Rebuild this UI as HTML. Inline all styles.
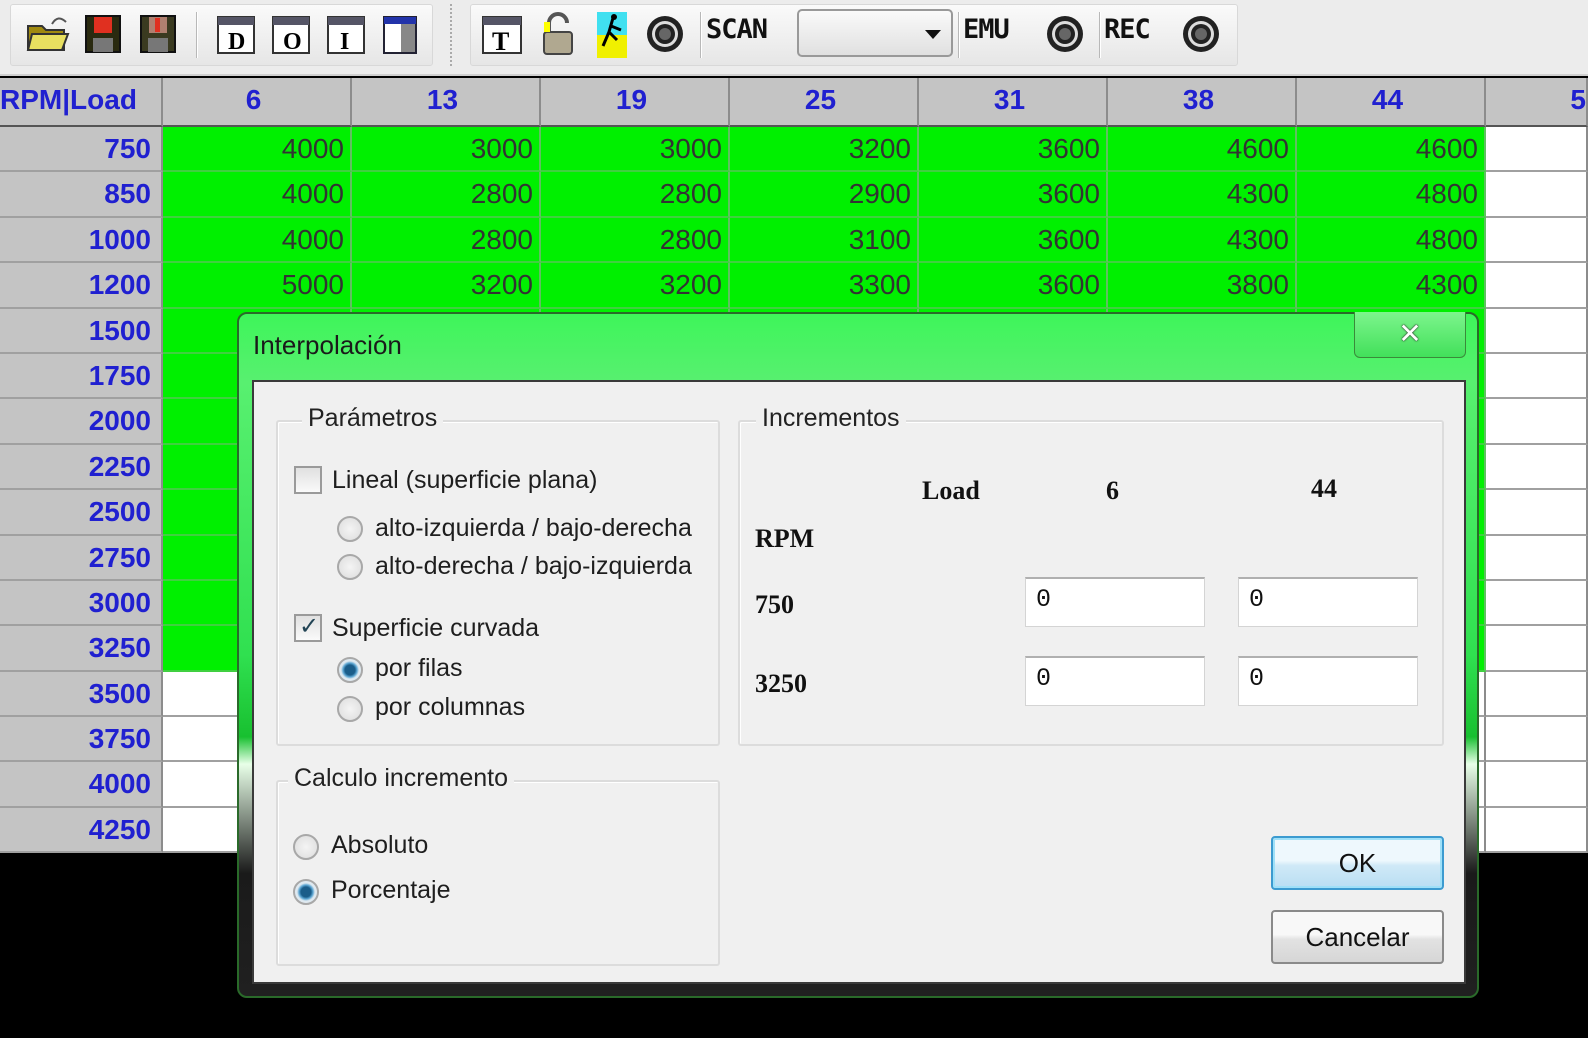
<!DOCTYPE html>
<html><head><meta charset="utf-8"><style>
*{box-sizing:border-box;margin:0;padding:0}
body{width:1588px;height:1038px;overflow:hidden;background:#000;font-family:"Liberation Sans",sans-serif;position:relative}
#tb{position:absolute;left:0;top:0;width:1588px;height:76px;background:#ececec;border-bottom:2px solid #d0d0d0}
.pn{position:absolute;top:4px;height:62px;background:linear-gradient(#fafafa,#e6e6e6);border:1px solid #d8d8d8;border-radius:3px}
.ic{position:absolute}
.sep{position:absolute;top:12px;width:2px;height:46px;background:#b8b8b8;border-right:1px solid #fff}
.tt{position:absolute;top:14px;font:bold 27px "DejaVu Sans Mono","Liberation Mono",monospace;color:#111;letter-spacing:-1px}
#grid{position:absolute;left:0;top:78px;display:grid;grid-template-columns:163px repeat(7,189px) 102px;grid-template-rows:49px repeat(16,45.4px)}
#grid div{border-right:2px solid #8c8c8c;border-bottom:2px solid #a0a0a0;font-size:28px;text-align:right;padding-right:6px;line-height:43px;color:#333;background:#fff}
#grid .h{background:#c4c4c4;color:#2020d0;font-weight:bold;text-align:center;line-height:44px;border-bottom:2px solid #555}
#grid .r{background:#c4c4c4;color:#2020d0;font-weight:bold;padding-right:10px}
#grid .g{background:#00f000;border-right:2px solid #60c060;border-bottom:2px solid #40d040}
#black{position:absolute;left:0;top:852px;width:1588px;height:186px;background:#000}
#dlg{position:absolute;left:237px;top:312px;width:1242px;height:686px;border-radius:10px;border:2px solid #2a6a2a;background:linear-gradient(180deg,#3ef55a 0%,#58f070 10%,#30e050 50%,#18c030 62%,#e8ffe8 66%,#1a1a1a 82%,#202020 100%)}
#ttl{position:absolute;left:14px;top:16px;font-size:26px;color:#1a1a1a}
#cls{position:absolute;left:1115px;top:-2px;width:112px;height:46px;border:1px solid #3a8a3a;border-top:none;border-radius:0 0 6px 6px;background:linear-gradient(#7df58d,#42e05a);color:#fff;font:bold 28px "DejaVu Sans",sans-serif;text-align:center;line-height:44px;text-shadow:0 0 2px #333,0 0 1px #000}
#cl{position:absolute;left:13px;top:66px;width:1214px;height:604px;background:#f0f0f0;border:2px solid #3a3a3a}
.gb{position:absolute;border:2px solid #dcdcdc;border-radius:3px;box-shadow:inset 1px 1px 0 #fff}
.gl{position:absolute;top:-18px;background:#f0f0f0;padding:0 6px;font-size:25px;color:#222}
.t{position:absolute;font-size:25px;color:#1e1e1e;white-space:nowrap}
.b{position:absolute;font:bold 26px "Liberation Serif",serif;color:#111}
.rd{position:absolute;width:26px;height:26px;border-radius:50%;border:2px solid #a8a8a8;background:radial-gradient(#f4f4f4,#dcdcdc)}
.rd.on{background:radial-gradient(circle,#1a5d8a 0 5px,#5da7d4 7px,#dfe9f0 9px)}
.cb{position:absolute;width:28px;height:28px;border:2px solid #9a9a9a;background:linear-gradient(#e0e0e0,#fafafa)}
.ed{position:absolute;width:180px;height:50px;background:#fff;border:1px solid #d4d4d4;border-top:2px solid #b0b0b0;font:25px "Liberation Mono",monospace;padding:6px 10px;color:#111}
.bt{position:absolute;width:173px;height:54px;border-radius:4px;font-size:26px;text-align:center;line-height:50px;color:#111}
</style></head><body>
<div id="tb">
 <div class="pn" style="left:10px;width:423px"></div>
 <div class="pn" style="left:470px;width:768px"></div>
 <svg class="ic" style="left:26px;top:14px" width="44" height="40"><path d="M2 12h14l4 4h18v20H2z" fill="#a08a10" stroke="#333" stroke-width="2"/><path d="M6 20h36l-6 16H2z" fill="#e8e060" stroke="#333" stroke-width="2"/><path d="M26 10q6-10 14-2" stroke="#555" fill="none" stroke-width="2"/></svg>
 <svg class="ic" style="left:84px;top:14px" width="38" height="40"><rect x="2" y="2" width="34" height="36" fill="#2a2a10" stroke="#111" stroke-width="2"/><rect x="10" y="3" width="18" height="16" fill="#e03020"/><rect x="9" y="24" width="20" height="14" fill="#777"/></svg>
 <svg class="ic" style="left:139px;top:14px" width="38" height="40"><rect x="2" y="2" width="34" height="36" fill="#3a3a20" stroke="#111" stroke-width="2"/><rect x="10" y="3" width="18" height="16" fill="#b08070"/><rect x="16" y="4" width="5" height="14" fill="#e03020"/><rect x="9" y="24" width="20" height="14" fill="#777"/></svg>
 <div class="sep" style="left:196px"></div>
 <svg class="ic" style="left:217px;top:16px" width="38" height="38"><rect x="1" y="1" width="36" height="36" fill="#fff" stroke="#333" stroke-width="2"/><rect x="1" y="1" width="36" height="8" fill="#556"/><text x="11" y="33" font-family="Liberation Serif" font-weight="bold" font-size="24">D</text></svg>
 <svg class="ic" style="left:272px;top:16px" width="38" height="38"><rect x="1" y="1" width="36" height="36" fill="#fff" stroke="#333" stroke-width="2"/><rect x="1" y="1" width="36" height="8" fill="#556"/><text x="11" y="33" font-family="Liberation Serif" font-weight="bold" font-size="24">O</text></svg>
 <svg class="ic" style="left:327px;top:16px" width="38" height="38"><rect x="1" y="1" width="36" height="36" fill="#fff" stroke="#333" stroke-width="2"/><rect x="1" y="1" width="36" height="8" fill="#556"/><text x="13" y="33" font-family="Liberation Serif" font-weight="bold" font-size="24">I</text></svg>
 <svg class="ic" style="left:383px;top:16px" width="34" height="38"><rect x="1" y="1" width="32" height="36" fill="#fff" stroke="#223" stroke-width="2"/><rect x="1" y="1" width="32" height="7" fill="#23a"/><rect x="18" y="8" width="14" height="28" fill="#888"/></svg>
 <div style="position:absolute;left:450px;top:4px;width:4px;height:62px;border-left:2px dotted #aaa"></div>
 <svg class="ic" style="left:482px;top:16px" width="40" height="38"><rect x="1" y="1" width="38" height="36" fill="#fff" stroke="#333" stroke-width="2"/><rect x="1" y="1" width="38" height="8" fill="#556"/><text x="10" y="34" font-family="Liberation Serif" font-weight="bold" font-size="26">T</text></svg>
 <svg class="ic" style="left:541px;top:12px" width="34" height="44"><path d="M8 20V11a9 9 0 0 1 18 0" fill="none" stroke="#555" stroke-width="4"/><rect x="3" y="20" width="28" height="22" rx="3" fill="#b0a890" stroke="#444" stroke-width="2"/><rect x="3" y="10" width="6" height="10" fill="#ff0"/></svg>
 <svg class="ic" style="left:597px;top:12px" width="30" height="46"><rect width="30" height="23" fill="#40e0f0"/><rect y="23" width="30" height="23" fill="#f0f000"/><path d="M16 6l-4 14 8 8M12 20l-6 14M14 14l10 4" stroke="#000" stroke-width="3" fill="none"/><circle cx="17" cy="5" r="3"/></svg>
 <svg class="ic" style="left:645px;top:14px" width="40" height="40"><circle cx="20" cy="20" r="18" fill="#222"/><circle cx="20" cy="20" r="13" fill="#ddd"/><circle cx="20" cy="20" r="10" fill="#222"/><circle cx="20" cy="20" r="6" fill="#666"/></svg>
 <div class="sep" style="left:700px"></div>
 <div class="tt" style="left:706px">SCAN</div>
 <div style="position:absolute;left:797px;top:9px;width:156px;height:48px;border:2px solid #999;border-radius:5px;background:linear-gradient(#fafafa,#e0e0e0)"><div style="position:absolute;right:10px;top:19px;border-left:8px solid transparent;border-right:8px solid transparent;border-top:9px solid #111"></div></div>
 <div class="sep" style="left:958px"></div>
 <div class="tt" style="left:963px">EMU</div>
 <svg class="ic" style="left:1045px;top:14px" width="40" height="40"><circle cx="20" cy="20" r="18" fill="#222"/><circle cx="20" cy="20" r="13" fill="#ddd"/><circle cx="20" cy="20" r="10" fill="#222"/><circle cx="20" cy="20" r="6" fill="#666"/></svg>
 <div class="sep" style="left:1099px"></div>
 <div class="tt" style="left:1104px">REC</div>
 <svg class="ic" style="left:1181px;top:14px" width="40" height="40"><circle cx="20" cy="20" r="18" fill="#222"/><circle cx="20" cy="20" r="13" fill="#ddd"/><circle cx="20" cy="20" r="10" fill="#222"/><circle cx="20" cy="20" r="6" fill="#666"/></svg>
</div>

<div id="grid">
<div class="h" style="text-align:left;padding-left:0">RPM|Load</div><div class="h">6</div><div class="h">13</div><div class="h">19</div><div class="h">25</div><div class="h">31</div><div class="h">38</div><div class="h">44</div><div class="h" style="text-align:right;padding-right:0">5</div>
<div class="r">750</div><div class="g">4000</div><div class="g">3000</div><div class="g">3000</div><div class="g">3200</div><div class="g">3600</div><div class="g">4600</div><div class="g">4600</div><div></div>
<div class="r">850</div><div class="g">4000</div><div class="g">2800</div><div class="g">2800</div><div class="g">2900</div><div class="g">3600</div><div class="g">4300</div><div class="g">4800</div><div></div>
<div class="r">1000</div><div class="g">4000</div><div class="g">2800</div><div class="g">2800</div><div class="g">3100</div><div class="g">3600</div><div class="g">4300</div><div class="g">4800</div><div></div>
<div class="r">1200</div><div class="g">5000</div><div class="g">3200</div><div class="g">3200</div><div class="g">3300</div><div class="g">3600</div><div class="g">3800</div><div class="g">4300</div><div></div>
<div class="r">1500</div><div class="g"></div><div class="g"></div><div class="g"></div><div class="g"></div><div class="g"></div><div class="g"></div><div class="g"></div><div></div>
<div class="r">1750</div><div class="g"></div><div class="g"></div><div class="g"></div><div class="g"></div><div class="g"></div><div class="g"></div><div class="g"></div><div></div>
<div class="r">2000</div><div class="g"></div><div class="g"></div><div class="g"></div><div class="g"></div><div class="g"></div><div class="g"></div><div class="g"></div><div></div>
<div class="r">2250</div><div class="g"></div><div class="g"></div><div class="g"></div><div class="g"></div><div class="g"></div><div class="g"></div><div class="g"></div><div></div>
<div class="r">2500</div><div class="g"></div><div class="g"></div><div class="g"></div><div class="g"></div><div class="g"></div><div class="g"></div><div class="g"></div><div></div>
<div class="r">2750</div><div class="g"></div><div class="g"></div><div class="g"></div><div class="g"></div><div class="g"></div><div class="g"></div><div class="g"></div><div></div>
<div class="r">3000</div><div class="g"></div><div class="g"></div><div class="g"></div><div class="g"></div><div class="g"></div><div class="g"></div><div class="g"></div><div></div>
<div class="r">3250</div><div class="g"></div><div class="g"></div><div class="g"></div><div class="g"></div><div class="g"></div><div class="g"></div><div class="g"></div><div></div>
<div class="r">3500</div><div></div><div></div><div></div><div></div><div></div><div></div><div></div><div></div>
<div class="r">3750</div><div></div><div></div><div></div><div></div><div></div><div></div><div></div><div></div>
<div class="r">4000</div><div></div><div></div><div></div><div></div><div></div><div></div><div></div><div></div>
<div class="r">4250</div><div></div><div></div><div></div><div></div><div></div><div></div><div></div><div></div>
</div>

<div id="dlg">
 <div id="ttl">Interpolación</div>
 <div id="cls">✕</div>
 <div id="cl">
  <div class="gb" style="left:22px;top:38px;width:444px;height:326px"><div class="gl" style="left:24px">Parámetros</div></div>
  <div class="gb" style="left:484px;top:38px;width:706px;height:326px"><div class="gl" style="left:16px">Incrementos</div></div>
  <div class="gb" style="left:22px;top:398px;width:444px;height:186px"><div class="gl" style="left:10px">Calculo incremento</div></div>

  <div class="cb" style="left:40px;top:84px"></div><div class="t" style="left:78px;top:84px">Lineal (superficie plana)</div>
  <div class="rd" style="left:83px;top:134px"></div><div class="t" style="left:121px;top:132px">alto-izquierda / bajo-derecha</div>
  <div class="rd" style="left:83px;top:172px"></div><div class="t" style="left:121px;top:170px">alto-derecha / bajo-izquierda</div>
  <div class="cb" style="left:40px;top:232px"><span style="position:absolute;left:3px;top:-4px;font-size:24px;color:#245">✓</span></div><div class="t" style="left:78px;top:232px">Superficie curvada</div>
  <div class="rd on" style="left:83px;top:275px"></div><div class="t" style="left:121px;top:272px">por filas</div>
  <div class="rd" style="left:83px;top:314px"></div><div class="t" style="left:121px;top:311px">por columnas</div>

  <div class="rd" style="left:39px;top:452px"></div><div class="t" style="left:77px;top:449px">Absoluto</div>
  <div class="rd on" style="left:39px;top:497px"></div><div class="t" style="left:77px;top:494px">Porcentaje</div>

  <div class="b" style="left:668px;top:94px">Load</div>
  <div class="b" style="left:852px;top:94px">6</div>
  <div class="b" style="left:1057px;top:92px">44</div>
  <div class="b" style="left:501px;top:142px">RPM</div>
  <div class="b" style="left:501px;top:208px">750</div>
  <div class="b" style="left:501px;top:287px">3250</div>
  <div class="ed" style="left:771px;top:195px">0</div>
  <div class="ed" style="left:984px;top:195px">0</div>
  <div class="ed" style="left:771px;top:274px">0</div>
  <div class="ed" style="left:984px;top:274px">0</div>

  <div class="bt" style="left:1017px;top:454px;border:2px solid #3c9bd0;box-shadow:inset 0 0 0 2px #9fe0f8;background:linear-gradient(#eef8fd 0 45%,#cfe9f7 55%,#b9def3)">OK</div>
  <div class="bt" style="left:1017px;top:528px;border:2px solid #8a8a8a;background:linear-gradient(#f8f8f8 0 45%,#e2e2e2 55%,#d6d6d6)">Cancelar</div>
 </div>
</div>
</body></html>
